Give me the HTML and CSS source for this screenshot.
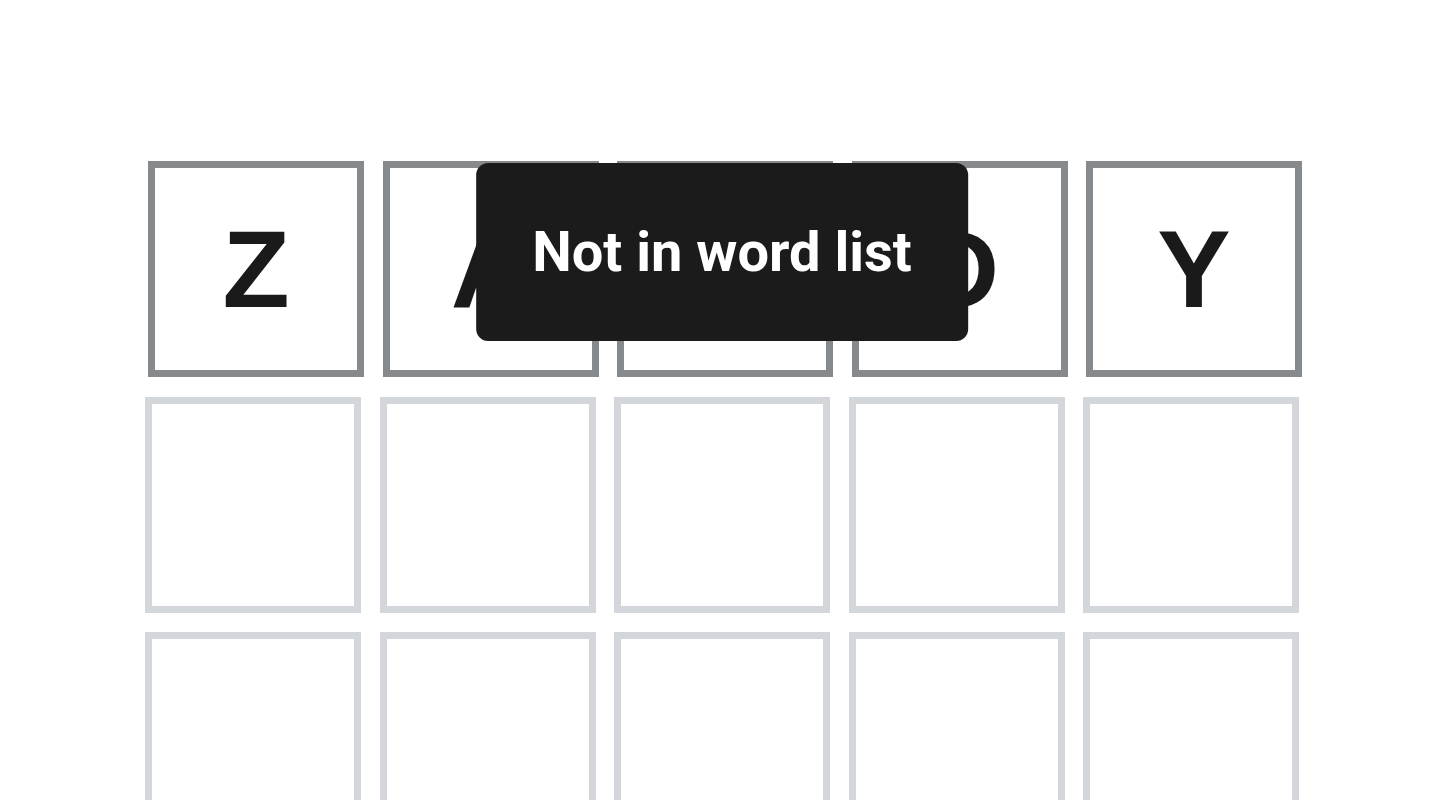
FILE: index.html
```html
<!DOCTYPE html>
<html lang="en">
<head>
<meta charset="utf-8">
<title>Wordle</title>
<link rel="stylesheet" href="styles.css">
</head>
<body>
<main class="game">
  <div class="board">
    <div class="row row-shake">
      <div class="tile tile-filled">Z</div>
      <div class="tile tile-filled">A</div>
      <div class="tile tile-filled">D</div>
      <div class="tile tile-filled">D</div>
      <div class="tile tile-filled">Y</div>
    </div>
    <div class="row">
      <div class="tile"></div><div class="tile"></div><div class="tile"></div><div class="tile"></div><div class="tile"></div>
    </div>
    <div class="row">
      <div class="tile"></div><div class="tile"></div><div class="tile"></div><div class="tile"></div><div class="tile"></div>
    </div>
    <div class="row">
      <div class="tile"></div><div class="tile"></div><div class="tile"></div><div class="tile"></div><div class="tile"></div>
    </div>
    <div class="row">
      <div class="tile"></div><div class="tile"></div><div class="tile"></div><div class="tile"></div><div class="tile"></div>
    </div>
    <div class="row">
      <div class="tile"></div><div class="tile"></div><div class="tile"></div><div class="tile"></div><div class="tile"></div>
    </div>
    <div class="toast">Not in word list</div>
  </div>
</main>
</body>
</html>
```

FILE: styles.css
```css
html, body {
  margin: 0;
  padding: 0;
  height: 100%;
  overflow: hidden;
  background: #ffffff;
}

body {
  font-family: "Liberation Sans", Arial, sans-serif;
  color: #1a1a1b;
}

.game {
  display: flex;
  justify-content: center;
  padding-top: 161px;
  padding-left: 4px;
}

.board {
  position: relative;
  display: flex;
  flex-direction: column;
  gap: 19.5px;
}

.row {
  display: flex;
  gap: 18.5px;
}

.row-shake {
  transform: translateX(3px);
}

.tile {
  box-sizing: border-box;
  width: 216px;
  height: 216px;
  border: 7px solid #d3d6da;
  display: flex;
  align-items: center;
  justify-content: center;
  font-family: "Liberation Sans", Arial, sans-serif;
  font-weight: 700;
  font-size: 110px;
  line-height: 1;
  text-transform: uppercase;
  color: #1a1a1a;
}

.tile-filled {
  border-color: #878a8c;
}

.toast {
  position: absolute;
  top: 2px;
  left: 50%;
  transform: translateX(-50%);
  margin-left: 0;
  padding: 56px;
  background: #1b1b1b;
  color: #ffffff;
  border-radius: 12px;
  font-family: Roboto, "Noto Sans", sans-serif;
  font-weight: 700;
  font-size: 56px;
  white-space: nowrap;
}
```
